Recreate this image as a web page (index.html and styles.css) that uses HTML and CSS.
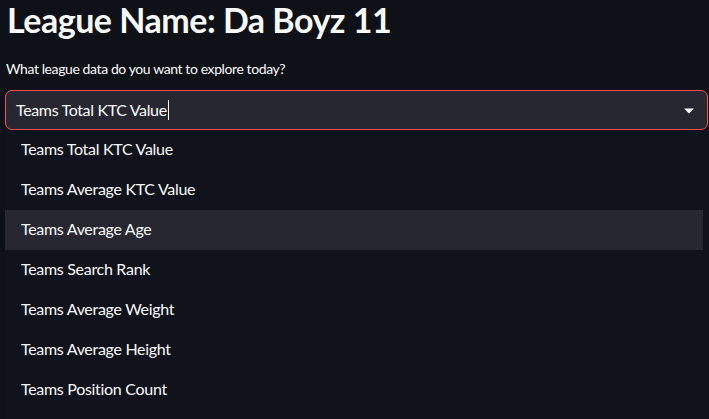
FILE: index.html
```html
<!DOCTYPE html>
<html>
<head>
<meta charset="utf-8">
<link rel="stylesheet" href="styles.css">
</head>
<body>
<main class="app">
  <h1 class="title">League Name: Da Boyz 11</h1>
  <label class="label">What league data do you want to explore today?</label>
  <div class="select-wrap">
    <div class="select">
      <span class="value">Teams Total KTC Value</span><span class="caret"></span>
      <svg class="arrow" width="10" height="6" viewBox="0 0 10 6"><path d="M0 0.5 L10 0.5 L5 5.5 Z" fill="#fafafa"/></svg>
    </div>
    <ul class="menu">
      <li class="option">Teams Total KTC Value</li>
      <li class="option">Teams Average KTC Value</li>
      <li class="option hover">Teams Average Age</li>
      <li class="option">Teams Search Rank</li>
      <li class="option">Teams Average Weight</li>
      <li class="option">Teams Average Height</li>
      <li class="option">Teams Position Count</li>
    </ul>
  </div>
</main>
</body>
</html>
```

FILE: styles.css
```css
html, body {
  margin: 0;
  padding: 0;
  background: #0e1117;
  color: #fafafa;
  font-family: Lato, "Open Sans", sans-serif;
  height: 100%;
  overflow: hidden;
}
.app {
  display: flex;
  flex-direction: column;
  padding: 0 1px 0 5px;
}
.title {
  margin: 0;
  padding-left: 2px;
  font-size: 34px;
  font-weight: 700;
  line-height: 40px;
  letter-spacing: -0.5px;
}
.label {
  margin-top: 20px;
  padding-left: 1px;
  padding-bottom: 1px;
  font-size: 14px;
  line-height: 18px;
  letter-spacing: -0.4px;
}
.select-wrap {
  position: relative;
  margin-top: 11px;
}
.select {
  height: 38px;
  border: 1px solid #ff4b4b;
  border-radius: 7px;
  background: #262730;
  display: flex;
  align-items: center;
  padding-left: 10px;
  position: relative;
}
.value {
  font-size: 16px;
  letter-spacing: -0.35px;
  padding-bottom: 2px;
}
.caret {
  width: 1px;
  height: 20px;
  background: #fafafa;
  margin-left: 1px;
}
.arrow {
  position: absolute;
  right: 13px;
  top: 17px;
}
.menu {
  position: absolute;
  top: 40px;
  left: 0;
  right: 0;
  margin: 0;
  padding: 0 5px 10px 0;
  list-style: none;
  background: #10131b;
}
.option {
  height: 40px;
  display: flex;
  align-items: center;
  padding-left: 16px;
  padding-bottom: 3px;
  box-sizing: border-box;
  font-size: 16px;
  letter-spacing: -0.3px;
}
.option.hover {
  background: #262730;
}
```
